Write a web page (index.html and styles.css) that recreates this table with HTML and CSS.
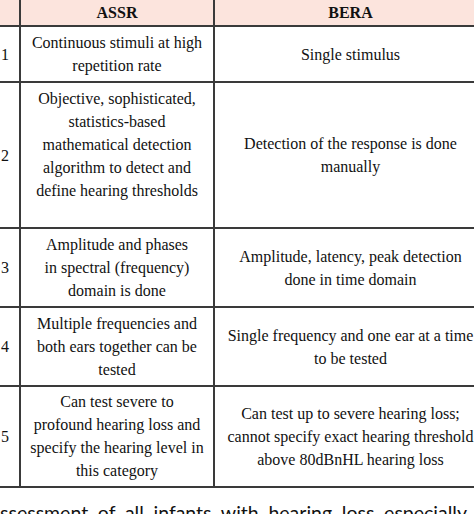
FILE: index.html
```html
<!DOCTYPE html>
<html>
<head>
<meta charset="utf-8">
<link rel="stylesheet" href="styles.css">
</head>
<body>
<div class="page">
  <table class="cmp">
    <colgroup>
      <col class="c-num">
      <col class="c-assr">
      <col class="c-bera">
    </colgroup>
    <thead>
      <tr class="head">
        <th></th>
        <th>ASSR</th>
        <th>BERA</th>
      </tr>
    </thead>
    <tbody>
      <tr>
        <td class="num">1</td>
        <td>Continuous stimuli at high<br>repetition rate</td>
        <td>Single stimulus</td>
      </tr>
      <tr>
        <td class="num">2</td>
        <td class="extra">Objective, sophisticated,<br>statistics-based<br>mathematical detection<br>algorithm to detect and<br>define hearing thresholds</td>
        <td>Detection of the response is done<br>manually</td>
      </tr>
      <tr>
        <td class="num">3</td>
        <td>Amplitude and phases<br>in spectral (frequency)<br>domain is done</td>
        <td>Amplitude, latency, peak detection<br>done in time domain</td>
      </tr>
      <tr>
        <td class="num">4</td>
        <td>Multiple frequencies and<br>both ears together can be<br>tested</td>
        <td>Single frequency and one ear at a time<br>to be tested</td>
      </tr>
      <tr>
        <td class="num">5</td>
        <td class="tight">Can test severe to<br>profound hearing loss and<br>specify the hearing level in<br>this category</td>
        <td class="tight">Can test up to severe hearing loss;<br>cannot specify exact hearing threshold<br>above 80dBnHL hearing loss</td>
      </tr>
    </tbody>
  </table>
  <p class="body-text">ssessment of all infants with hearing loss especially</p>
</div>
</body>
</html>
```

FILE: styles.css
```css
html, body {
  margin: 0;
  padding: 0;
  background: #ffffff;
}
body {
  width: 474px;
  height: 514px;
  overflow: hidden;
}
.page {
  width: 474px;
  height: 514px;
  overflow: hidden;
}
.cmp {
  border-collapse: collapse;
  table-layout: fixed;
  width: 496px;
  margin-left: -11px;
  font-family: "Liberation Serif", "Times New Roman", serif;
  font-size: 16px;
  line-height: 23px;
  color: #111111;
}
.c-num { width: 30px; }
.c-assr { width: 194px; }
.c-bera { width: 272px; }
.cmp th,
.cmp td {
  border: 2px solid #3a3a3a;
  text-align: center;
  vertical-align: middle;
  white-space: nowrap;
  padding: 4px 0;
}
.cmp td:last-child,
.cmp th:last-child {
  border-right: none;
}
.cmp .head th {
  background: #fce4dd;
  font-weight: bold;
  border-top: none;
  padding: 0;
  height: 25px;
  line-height: 25px;
}
.cmp td.extra {
  padding-bottom: 25px;
}
.cmp td.tight {
  padding: 3px 0 4px;
}
.body-text {
  margin: 13px 0 0 0;
  width: 467px;
  font-family: Lato, "Open Sans", sans-serif;
  font-size: 19.5px;
  line-height: 24px;
  color: #111111;
  text-align: justify;
  text-align-last: justify;
}
```
